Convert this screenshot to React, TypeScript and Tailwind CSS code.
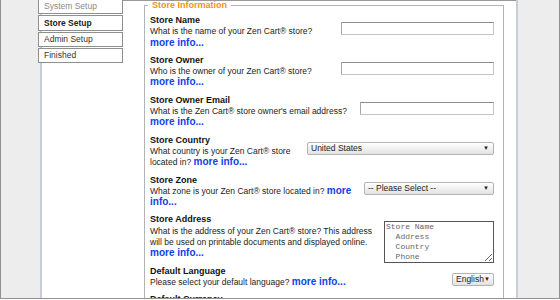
import React from "react";

function MoreInfo() {
  return (
    <a className="text-[10px] font-bold text-[#1040e8] leading-[8px] cursor-pointer">
      more info...
    </a>
  );
}

function Row({
  label,
  desc,
  control,
  controlWrap,
}: {
  label: string;
  desc: React.ReactNode;
  control: React.ReactNode;
  controlWrap: string;
}) {
  return (
    <div className="flex items-start mb-[6px]">
      <div className="flex-1 min-w-0">
        <div className="text-[9px] font-bold leading-[11.3px] text-[#111]">{label}</div>
        <div className="text-[8.5px] leading-[11.3px] text-[#222]">{desc}</div>
      </div>
      <div className={controlWrap}>{control}</div>
    </div>
  );
}

function TextInput({ w }: { w: string }) {
  return (
    <input
      type="text"
      className={`${w} h-[13px] block bg-white border border-[#c4c4c4] border-t-[#8c8c8c] border-l-[#a6a6a6] outline-none`}
    />
  );
}

function FakeSelect({ text, className }: { text: string; className: string }) {
  return (
    <div
      className={`${className} h-[13px] flex items-center justify-between rounded-[2px] border border-[#b3b3b3] bg-linear-to-b from-white to-[#e2e2e2] pl-[3px] pr-[4px] text-[8.5px] text-[#222] leading-none`}
    >
      <span className="whitespace-nowrap">{text}</span>
      <span className="text-[6px] text-[#222]">▼</span>
    </div>
  );
}

export default function App() {
  const navItem =
    "h-[15px] mb-[1px] border border-[#8f8f8f] bg-white pl-[5px] flex items-center text-[8.5px] leading-none whitespace-nowrap";
  return (
    <div className="w-[560px] h-[300px] overflow-hidden bg-white font-['Liberation_Sans',Arial,sans-serif]">
      <div className="flex h-[299px] overflow-hidden border-l border-r border-b border-[#929292]">
        {/* left strip */}
        <div className="w-[41px] shrink-0 bg-[#ededed] border-r-2 border-[#c8ced8]" />

        {/* main white area */}
        <div className="flex flex-1 min-w-0 bg-white">
          {/* nav */}
          <div className="relative z-10 -ml-[4px] w-[85px] shrink-0 -mt-[1px]">
            <div className={`${navItem} text-[#8a8a8a]`}>System Setup</div>
            <div className={`${navItem} h-[16px] bg-[#ccdaee] font-bold text-[#222]`}>Store Setup</div>
            <div className={`${navItem} text-[#333]`}>Admin Setup</div>
            <div className={`${navItem} text-[#333]`}>Finished</div>
          </div>

          {/* content column */}
          <div className="flex-1 min-w-0 border-t border-[#9a9a9a] pl-[21px] pr-[12px]">
            <fieldset className="border border-[#b4b4b4] pl-[5px] pr-[9px] pb-[10px]">
              <legend className="-ml-[2px] px-[4px] text-[9px] font-bold leading-[9px] text-[#f39019]">
                Store Information
              </legend>
              <div className="pt-[5px]">
                <Row
                  label="Store Name"
                  desc={
                    <>
                      What is the name of your Zen Cart® store? <MoreInfo />
                    </>
                  }
                  controlWrap="shrink-0 mt-[7px] ml-[12px]"
                  control={<TextInput w="w-[153px]" />}
                />
                <Row
                  label="Store Owner"
                  desc={
                    <>
                      Who is the owner of your Zen Cart® store? <MoreInfo />
                    </>
                  }
                  controlWrap="shrink-0 mt-[7px] ml-[12px]"
                  control={<TextInput w="w-[153px]" />}
                />
                <Row
                  label="Store Owner Email"
                  desc={
                    <>
                      What is the Zen Cart® store owner's email address? <MoreInfo />
                    </>
                  }
                  controlWrap="shrink-0 mt-[7px] ml-[10px]"
                  control={<TextInput w="w-[134px]" />}
                />
                <Row
                  label="Store Country"
                  desc={
                    <>
                      What country is your Zen Cart® store located in? <MoreInfo />
                    </>
                  }
                  controlWrap="shrink-0 mt-[7px] ml-[10px]"
                  control={<FakeSelect text="United States" className="w-[187px]" />}
                />
                <Row
                  label="Store Zone"
                  desc={
                    <>
                      What zone is your Zen Cart® store located in? <MoreInfo />
                    </>
                  }
                  controlWrap="shrink-0 mt-[7px] ml-[8px]"
                  control={<FakeSelect text="-- Please Select --" className="w-[130px]" />}
                />
                <Row
                  label="Store Address"
                  desc={
                    <>
                      What is the address of your Zen Cart® store? This address will be used on
                      printable documents and displayed online. <MoreInfo />
                    </>
                  }
                  controlWrap="shrink-0 mt-[7px] ml-[8px] -mb-[6px]"
                  control={
                    <textarea
                      readOnly
                      defaultValue={"Store Name\n  Address\n  Country\n  Phone"}
                      className="block w-[110px] h-[42px] border border-[#555] bg-white px-[1px] py-0 font-['Liberation_Mono','Courier_New',monospace] text-[8px] leading-[10px] text-[#666] overflow-hidden outline-none"
                    />
                  }
                />
                <Row
                  label="Default Language"
                  desc={
                    <>
                      Please select your default language? <MoreInfo />
                    </>
                  }
                  controlWrap="shrink-0 mt-[7px] ml-[10px]"
                  control={<FakeSelect text="English" className="w-[42px]" />}
                />
                <Row
                  label="Default Currency"
                  desc={
                    <>
                      Please select your default currency? <MoreInfo />
                    </>
                  }
                  controlWrap="shrink-0 mt-[6px] ml-[10px]"
                  control={<FakeSelect text="US Dollar" className="w-[75px]" />}
                />
              </div>
            </fieldset>
          </div>
        </div>

        {/* right strip */}
        <div className="w-[43px] shrink-0 bg-[#ededed] border-l-2 border-[#c8ced8]" />
      </div>
    </div>
  );
}
